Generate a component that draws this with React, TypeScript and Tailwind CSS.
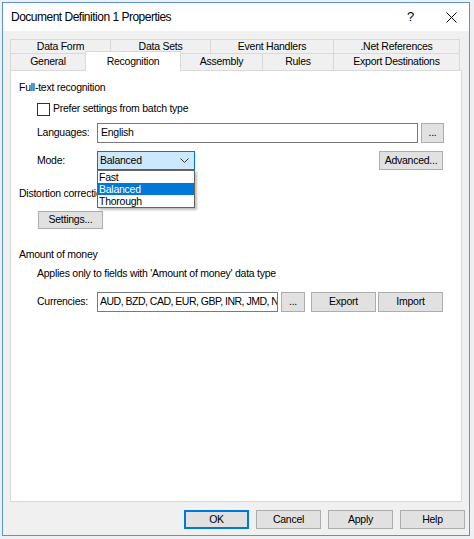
import React from 'react'

const font = { fontFamily: '"Liberation Sans", Arial, sans-serif' }

const Btn: React.FC<{ label: string; className?: string; primary?: boolean }> = ({ label, className = '', primary }) => (
  <div
    className={`flex items-center justify-center bg-[#e1e1e1] text-black ${
      primary ? 'border-2 border-[#0078d7]' : 'border border-[#adadad]'
    } ${className}`}
  >
    {label}
  </div>
)

const Tab: React.FC<{ label: string; w: string; active?: boolean }> = ({ label, w, active }) => (
  <div
    className={`${w} flex items-center justify-center border border-[#d9d9d9] -ml-px first:ml-0 ${
      active ? 'bg-white h-[20px] -mt-[2px] border-b-0 relative z-10' : 'bg-[#f0f0f0] h-[18px]'
    }`}
  >
    {label}
  </div>
)

export default function App() {
  return (
    <div
      className="w-[474px] h-[539px] bg-[#eef0f3] pt-[2px] pl-[2px] text-black text-[10.5px] tracking-[-0.25px]"
      style={font}
    >
      <div className="w-[468px] h-[534px] border border-[#5b93d3] flex flex-col bg-[#f0f0f0]">
        {/* title bar */}
        <div className="h-[28px] bg-white flex items-center pl-[8px] pr-[12px] shrink-0">
          <span className="text-[12px] tracking-[-0.5px] flex-1">Document Definition 1 Properties</span>
          <span className="text-[13px] mr-[32px]">?</span>
          <svg width="11" height="11" viewBox="0 0 11 11">
            <path d="M0.5 0.5 L10.5 10.5 M10.5 0.5 L0.5 10.5" stroke="#000" strokeWidth="1" />
          </svg>
        </div>

        <div className="flex-1 flex flex-col pl-[7px] pr-[4px] pt-[8px]">
          {/* tabs */}
          <div className="flex h-[15px]">
            <div className="w-[101px] flex items-center justify-center border border-[#d9d9d9] h-[16px]">Data Form</div>
            <div className="w-[101px] -ml-px flex items-center justify-center border border-[#d9d9d9] h-[16px]">Data Sets</div>
            <div className="w-[124px] -ml-px flex items-center justify-center border border-[#d9d9d9] h-[16px]">Event Handlers</div>
            <div className="w-[127px] -ml-px flex items-center justify-center border border-[#d9d9d9] h-[16px]">.Net References</div>
          </div>
          <div className="flex items-end h-[17px]">
            <Tab label="General" w="w-[76px]" />
            <Tab label="Recognition" w="w-[96px]" active />
            <Tab label="Assembly" w="w-[83px]" />
            <Tab label="Rules" w="w-[72px]" />
            <Tab label="Export Destinations" w="w-[127px]" />
          </div>

          {/* panel */}
          <div className="w-[452px] h-[432px] -mt-px bg-white border border-[#d9d9d9] relative">
            <div className="pl-[8px] pt-[9px]">
              <div className="h-[16px] flex items-center">Full-text recognition</div>

              <div className="h-[16px] mt-[5px] flex items-center pl-[18px]">
                <div className="w-[13px] h-[13px] border border-[#333] bg-white mr-[3px]" />
                <span>Prefer settings from batch type</span>
              </div>

              <div className="h-[20px] mt-[6px] flex items-center pl-[18px]">
                <span className="w-[60px]">Languages:</span>
                <div className="w-[321px] h-[20px] border border-[#7a7a7a] flex items-center pl-[3px]">English</div>
                <Btn label="..." className="w-[23px] h-[20px] ml-[3px]" />
              </div>

              <div className="h-[19px] mt-[8px] flex items-center pl-[18px]">
                <span className="w-[60px]">Mode:</span>
                <div className="relative">
                  <div className="w-[98px] h-[19px] border border-[#0078d7] bg-[#cce8ff] flex items-center pl-[2px]">
                    <span className="flex-1">Balanced</span>
                    <svg width="9" height="6" viewBox="0 0 9 6" className="mr-[5px]">
                      <path d="M0.5 0.5 L4.5 4.5 L8.5 0.5" fill="none" stroke="#333" strokeWidth="1" />
                    </svg>
                  </div>
                  <div className="absolute left-0 top-[19px] w-[98px] border border-[#646464] bg-white z-20 shadow-[2px_2px_2px_rgba(0,0,0,0.25)]">
                    <div className="h-[12px] leading-[12px] pl-[1px]">Fast</div>
                    <div className="h-[12px] leading-[12px] pl-[1px] bg-[#0078d7] text-white">Balanced</div>
                    <div className="h-[12px] leading-[12px] pl-[1px]">Thorough</div>
                  </div>
                </div>
                <Btn label="Advanced..." className="w-[64px] h-[19px] ml-auto mr-[18px]" />
              </div>

              <div className="h-[16px] mt-[16px] flex items-center">Distortion correction</div>

              <div className="mt-[9px] pl-[19px]">
                <Btn label="Settings..." className="w-[65px] h-[18px]" />
              </div>

              <div className="h-[16px] mt-[18px] flex items-center">Amount of money</div>
              <div className="h-[16px] mt-[3px] flex items-center pl-[18px]">
                Applies only to fields with 'Amount of money' data type
              </div>

              <div className="h-[20px] mt-[10px] flex items-center pl-[18px]">
                <span className="w-[60px]">Currencies:</span>
                <div className="w-[181px] h-[20px] border border-[#7a7a7a] flex items-center pl-[2px] overflow-hidden whitespace-nowrap tracking-[-0.5px]">
                  AUD, BZD, CAD, EUR, GBP, INR, JMD, N
                </div>
                <Btn label="..." className="w-[24px] h-[20px] ml-[3px]" />
                <Btn label="Export" className="w-[65px] h-[20px] ml-[6px]" />
                <Btn label="Import" className="w-[65px] h-[20px] ml-[2px]" />
              </div>
            </div>
          </div>

          {/* bottom buttons */}
          <div className="flex justify-end gap-[7px] mt-[8px]">
            <Btn label="OK" primary className="w-[65px] h-[19px]" />
            <Btn label="Cancel" className="w-[65px] h-[19px]" />
            <Btn label="Apply" className="w-[65px] h-[19px]" />
            <Btn label="Help" className="w-[65px] h-[19px]" />
          </div>
        </div>
      </div>
    </div>
  )
}
